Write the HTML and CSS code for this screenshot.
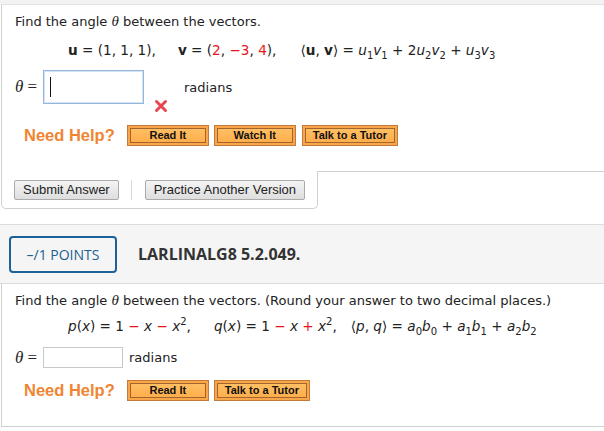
FILE: index.html
```html
<!DOCTYPE html>
<html>
<head>
<meta charset="utf-8">
<link rel="stylesheet" href="styles.css">
</head>
<body>
<div class="topband"></div>
<div class="q1">
  <div class="qbody">
    <p class="prompt">Find the angle <i class="th">θ</i> between the vectors.</p>
    <div class="math m1">
      <span class="seg s1"><b>u</b> = (1, 1, 1),</span>
      <span class="seg s2"><b>v</b> = (<span class="r">2</span>, <span class="r">−3</span>, <span class="r">4</span>),</span>
      <span class="seg">⟨<b>u</b>, <b>v</b>⟩ = <i>u</i><sub>1</sub><i>v</i><sub>1</sub> + 2<i>u</i><sub>2</sub><i>v</i><sub>2</sub> + <i>u</i><sub>3</sub><i>v</i><sub>3</sub></span>
    </div>
    <div class="ans a1">
      <span class="theq"><i>θ</i> =</span>
      <span class="field focus"><span class="caret"></span></span>
      <svg class="xmark" width="14" height="14" viewBox="0 0 14 14"><path d="M2.5 2.5 L11.5 11.5 M11.5 2.5 L2.5 11.5" stroke="#e8474f" stroke-width="3" stroke-linecap="round"/></svg>
      <span class="unit">radians</span>
    </div>
    <div class="help">
      <span class="nh">Need Help?</span>
      <span class="obtn w82"><span>Read It</span></span>
      <span class="obtn w82"><span>Watch It</span></span>
      <span class="obtn tutor"><span>Talk to a Tutor</span></span>
    </div>
  </div>
  <div class="foot">
    <div class="actions">
      <button class="gbtn">Submit Answer</button>
      <span class="sep"></span>
      <button class="gbtn">Practice Another Version</button>
    </div>
    <div class="filler"></div>
  </div>
</div>

<div class="qhead">
  <span class="pts">–/1 POINTS</span>
  <span class="code">LARLINALG8 5.2.049.</span>
</div>

<div class="q2">
  <p class="prompt">Find the angle <i class="th">θ</i> between the vectors. (Round your answer to two decimal places.)</p>
  <div class="math m2">
    <span class="seg t1"><i>p</i>(<i>x</i>) = 1 <span class="r">−</span> <i>x</i> <span class="r">−</span> <i>x</i><sup>2</sup>,</span>
    <span class="seg t2"><i>q</i>(<i>x</i>) = 1 <span class="r">−</span> <i>x</i> <span class="r">+</span> <i>x</i><sup>2</sup>,</span>
    <span class="seg">⟨<i>p</i>, <i>q</i>⟩ = <i>a</i><sub>0</sub><i>b</i><sub>0</sub> + <i>a</i><sub>1</sub><i>b</i><sub>1</sub> + <i>a</i><sub>2</sub><i>b</i><sub>2</sub></span>
  </div>
  <div class="ans a2">
    <span class="theq"><i>θ</i> =</span>
    <span class="field small"></span>
    <span class="unit u2">radians</span>
  </div>
  <div class="help">
    <span class="nh">Need Help?</span>
    <span class="obtn w82"><span>Read It</span></span>
    <span class="obtn tutor"><span>Talk to a Tutor</span></span>
  </div>
</div>
</body>
</html>
```
FILE: styles.css
```css
* { box-sizing: border-box; }
html, body { margin: 0; padding: 0; background: #fff; }
body {
  font-family: "DejaVu Sans", Verdana, sans-serif;
  font-size: 13px;
  color: #222;
  width: 604px;
  overflow: hidden;
}
.topband { height: 4px; background: #f3f3f3; }

.q1 { margin-left: 1px; }
.qbody {
  border-top: 1px solid #e2e2e2;
  border-left: 1px solid #d0d0d0;
  padding: 8px 14px 25px 13px;
}
.prompt { margin: 0; line-height: 16px; }
.th { font-family: "Liberation Serif", serif; font-size: 15px; }

.math { display: flex; font-size: 13.6px; line-height: 20px; white-space: nowrap; }
.m1 { margin-top: 10px; padding-left: 53px; }
.m1 .s1 { margin-right: 22px; }
.m1 .s2 { margin-right: 24px; }
.math b { font-weight: bold; }
.math i { font-style: italic; }
.r { color: #e8141b; }
sub { font-size: 10px; vertical-align: -4px; line-height: 0; }
sup { font-size: 10px; vertical-align: 6px; line-height: 0; }

.ans { display: flex; align-items: center; }
.a1 { margin-top: 10px; height: 34px; }
.theq { font-family: "Liberation Serif", serif; font-size: 17px; width: 28px; }
.field {
  display: block;
  border: 1px solid #c8c8c8;
  background: #fff;
}
.field.focus {
  width: 101px; height: 34px;
  border: 1px solid #93b8dc;
  box-shadow: inset 0 0 0 1px #d3e3f3;
  padding: 6px 6px;
}
.caret { display: block; width: 1px; height: 20px; background: #111; }
.xmark { align-self: flex-end; margin: 0 0 -9px 10px; }
.unit { margin-left: 16px; }

.help { display: flex; align-items: center; margin-top: 21px; padding-left: 9px; }
.nh {
  font-family: "Liberation Sans", Arial, sans-serif;
  font-weight: bold;
  font-size: 16.5px;
  color: #ef8532;
  margin-right: 12px;
}
.obtn {
  display: block;
  height: 21px;
  padding: 2px;
  border: 1px solid #c47a3a;
  background: #f9a648;
  margin-right: 5px;
}
.obtn span {
  display: block;
  height: 15px;
  border: 1px solid #a3652f;
  background: linear-gradient(#ffbf62, #ffae4c);
  font-family: "Liberation Sans", Arial, sans-serif;
  font-weight: bold;
  font-size: 11px;
  line-height: 13px;
  color: #111;
  text-align: center;
  padding: 0 6px;
  white-space: nowrap;
}
.obtn.tutor span { padding: 0 7px; }
.w82 { width: 82px; }
.w82 + .w82 { margin-right: 6px; }

.foot { display: flex; }
.actions {
  display: flex;
  align-items: center;
  flex: 0 0 316px;
  padding: 9px 12px 8px 12px;
  border-left: 1px solid #d0d0d0;
  border-right: 1px solid #d0d0d0;
  border-bottom: 1px solid #d0d0d0;
  border-radius: 0 0 5px 5px;
}
.filler { flex: 1; border-top: 1px solid #d0d0d0; }
.gbtn {
  flex: none;
  height: 20px;
  padding: 0 8px;
  border: 1px solid #aaa;
  border-radius: 2px;
  background: linear-gradient(#f4f4f4, #dedede);
  font-family: "Liberation Sans", Arial, sans-serif;
  font-size: 13px;
  line-height: 18px;
  color: #222;
  white-space: nowrap;
}
.sep { flex: none; width: 1px; height: 20px; background: #d8d8d8; margin: 0 13px 0 12px; }

.qhead {
  margin-top: 15px;
  height: 60px;
  border-top: 1px solid #dcdcdc;
  border-bottom: 1px solid #dcdcdc;
  background: #f5f5f5;
  display: flex;
  align-items: center;
  padding-left: 9px;
}
.pts {
  display: flex;
  align-items: center;
  justify-content: center;
  width: 108px;
  height: 37px;
  border: 2px solid #1c6298;
  border-radius: 4px;
  font-family: "Open Sans", sans-serif;
  font-size: 14px;
  color: #1c5f91;
}
.code {
  margin-left: 21px;
  font-family: "Open Sans", sans-serif;
  font-weight: bold;
  font-size: 16px;
  color: #333;
}

.q2 {
  margin-left: 1px;
  border-left: 1px solid #d0d0d0;
  border-bottom: 1px solid #d0d0d0;
  padding: 8px 14px 25px 13px;
}
.m2 { margin-top: 7px; padding-left: 53px; }
.m2 .t1 { margin-right: 23px; }
.m2 .t2 { margin-right: 14px; }
.a2 { margin-top: 11px; height: 21px; }
.field.small { width: 80px; height: 21px; }
.u2 { margin-left: 6px; }
.q2 .help { margin-top: 12px; }
```
